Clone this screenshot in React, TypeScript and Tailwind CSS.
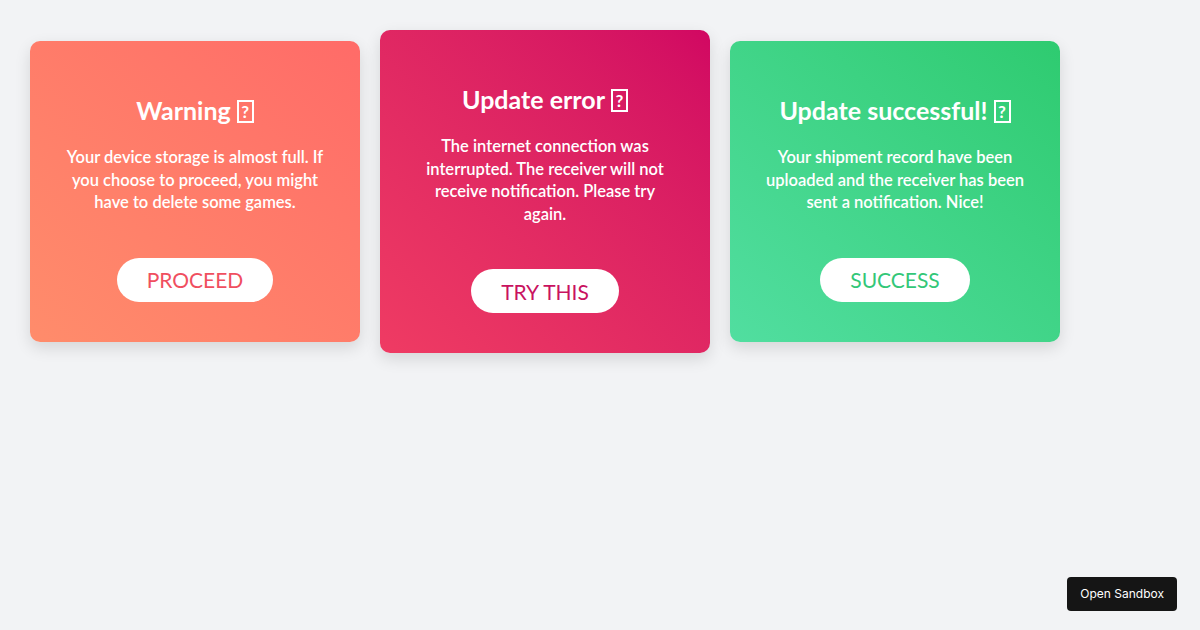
import type { ReactNode } from "react";

type Card = {
  title: string;
  lines: string[];
  action: string;
  bg: string;
  btn: string;
};

const CARDS: Card[] = [
  {
    title: "Warning",
    lines: ["Your device storage is almost full. If", "you choose to proceed, you might", "have to delete some games."],
    action: "PROCEED",
    bg: "bg-linear-to-tr from-[#ff8c6b] to-[#ff6b68]",
    btn: "text-[#f04f5f]",
  },
  {
    title: "Update error",
    lines: ["The internet connection was", "interrupted. The receiver will not", "receive notification. Please try", "again."],
    action: "TRY THIS",
    bg: "bg-linear-to-tr from-[#ef3b63] to-[#d10762]",
    btn: "text-[#c91260]",
  },
  {
    title: "Update successful!",
    lines: ["Your shipment record have been", "uploaded and the receiver has been", "sent a notification. Nice!"],
    action: "SUCCESS",
    bg: "bg-linear-to-tr from-[#51dea0] to-[#2ecb70]",
    btn: "text-[#33c778]",
  },
];

function Tofu() {
  return (
    <span className="ml-[6px] inline-flex h-[23px] w-[17px] translate-y-[1px] items-center justify-center border-2 border-white text-[17px] leading-none font-bold">
      ?
    </span>
  );
}

function NoticeCard({ card }: { card: Card }): ReactNode {
  return (
    <div
      className={`w-[330px] rounded-[10px] px-4 pt-[51px] pb-10 text-center text-white shadow-[0_6px_16px_rgba(0,0,0,0.12)] ${card.bg}`}
    >
      <h2 className="flex items-center justify-center text-[25px] leading-[36px] font-bold">
        {card.title}
        <Tofu />
      </h2>
      <p className="mt-[18px] text-[16.5px] leading-[22.5px] font-semibold">
        {card.lines.map((l, i) => (
          <span key={i} className="block whitespace-nowrap">
            {l}
          </span>
        ))}
      </p>
      <button
        className={`mt-[44px] h-[44px] rounded-full bg-white px-[30px] text-[21px] leading-none ${card.btn}`}
      >
        {card.action}
      </button>
    </div>
  );
}

export default function App() {
  return (
    <div className="relative min-h-[630px] w-full bg-[#f2f3f5] font-['Lato',sans-serif]">
      <div className="flex items-center gap-5 px-[30px] pt-[30px]">
        {CARDS.map((c) => (
          <NoticeCard key={c.title} card={c} />
        ))}
      </div>
      <button className="absolute right-[23px] bottom-[19px] h-[34px] rounded-[4px] bg-[#151515] px-[13px] font-['Inter',sans-serif] text-[12px] text-white">
        Open Sandbox
      </button>
    </div>
  );
}
